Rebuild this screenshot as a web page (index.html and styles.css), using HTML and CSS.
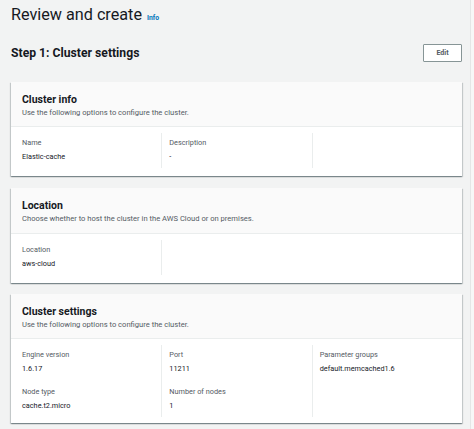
FILE: index.html
```html
<!DOCTYPE html>
<html lang="en">
<head>
<meta charset="utf-8">
<title>Review and create</title>
<link rel="stylesheet" href="styles.css">
</head>
<body>
<div class="page">
  <div class="page-header">
    <h1 class="page-title">Review and create</h1>
    <a class="info-link" href="#">Info</a>
  </div>

  <div class="step-header">
    <h2 class="step-title">Step 1: Cluster settings</h2>
    <button class="btn" type="button">Edit</button>
  </div>

  <section class="card">
    <div class="card-header">
      <h3 class="card-title">Cluster info</h3>
      <p class="card-desc">Use the following options to configure the cluster.</p>
    </div>
    <div class="card-body">
      <div class="col">
        <div class="field"><div class="label">Name</div><div class="value">Elastic-cache</div></div>
      </div>
      <div class="col">
        <div class="field"><div class="label">Description</div><div class="value">-</div></div>
      </div>
      <div class="col"></div>
    </div>
  </section>

  <section class="card">
    <div class="card-header card-header-tall">
      <h3 class="card-title">Location</h3>
      <p class="card-desc">Choose whether to host the cluster in the AWS Cloud or on premises.</p>
    </div>
    <div class="card-body">
      <div class="col">
        <div class="field"><div class="label">Location</div><div class="value">aws-cloud</div></div>
      </div>
      <div class="col col-wide"></div>
    </div>
  </section>

  <section class="card card-last">
    <div class="card-header">
      <h3 class="card-title">Cluster settings</h3>
      <p class="card-desc">Use the following options to configure the cluster.</p>
    </div>
    <div class="card-body card-body-tight">
      <div class="col">
        <div class="field"><div class="label">Engine version</div><div class="value">1.6.17</div></div>
        <div class="field"><div class="label">Node type</div><div class="value">cache.t2.micro</div></div>
      </div>
      <div class="col">
        <div class="field"><div class="label">Port</div><div class="value">11211</div></div>
        <div class="field"><div class="label">Number of nodes</div><div class="value">1</div></div>
      </div>
      <div class="col">
        <div class="field"><div class="label">Parameter groups</div><div class="value">default.memcached1.6</div></div>
      </div>
    </div>
  </section>
</div>
</body>
</html>
```

FILE: styles.css
```css
* { box-sizing: border-box; }

html, body {
  margin: 0;
  padding: 0;
  background: #f7f7f7;
}

body {
  font-family: Roboto, "Liberation Sans", sans-serif;
  color: #16191f;
}

.page {
  width: 471px;
  min-height: 429px;
  padding: 0 8px 20px 11px;
  background: #f2f3f3;
  border-right: 1px solid #e4e6e6;
}

.page-header {
  display: flex;
  align-items: baseline;
  gap: 5px;
  height: 34px;
  padding-top: 4px;
}

.page-title {
  margin: 0;
  font-size: 16.2px;
  line-height: 22px;
  font-weight: 400;
  color: #16191f;
}

.info-link {
  font-size: 6.8px;
  font-weight: 700;
  color: #0073bb;
  text-decoration: none;
}

.step-header {
  display: flex;
  justify-content: space-between;
  align-items: center;
  height: 36px;
  margin-top: 1px;
}

.step-title {
  margin: 0;
  font-size: 12.2px;
  line-height: 18px;
  font-weight: 700;
  color: #16191f;
}

.btn {
  width: 39px;
  height: 18px;
  padding: 0;
  background: #ffffff;
  border: 1px solid #879596;
  border-radius: 1px;
  font-family: Roboto, "Liberation Sans", sans-serif;
  font-size: 7px;
  font-weight: 700;
  color: #545b64;
}

.card {
  background: #ffffff;
  margin-top: 12px;
  box-shadow: 0 1px 1px 0 rgba(0, 28, 36, 0.3), 1px 1px 1px 0 rgba(0, 28, 36, 0.15), -1px 1px 1px 0 rgba(0, 28, 36, 0.15);
}

.step-header + .card { margin-top: 11px; }

.card-last { margin-top: 11px; }

.card-header {
  background: #fafafa;
  border-bottom: 1px solid #eaeded;
  padding: 11px 11px 10px;
  height: 45px;
}

.card-header-tall { height: 46px; padding-top: 11px; }

.card-title {
  margin: 0;
  font-size: 10.5px;
  line-height: 14px;
  font-weight: 700;
  color: #16191f;
}

.card-desc {
  margin: 0;
  font-size: 7.6px;
  line-height: 11px;
  color: #545b64;
}

.card-body {
  display: grid;
  grid-template-columns: 1fr 1fr 1fr;
  padding: 6px 0 8px;
}

.card-body-tight { padding-bottom: 6px; }

.col {
  padding: 3px 7px 4px 7px;
  border-left: 1px solid #eaeded;
  display: flex;
  flex-direction: column;
  gap: 9px;
}

.col:first-child {
  border-left: none;
  padding-left: 11px;
}

.col-wide { grid-column: span 2; }

.field {
  display: flex;
  flex-direction: column;
}

.label {
  font-size: 7.3px;
  line-height: 14px;
  color: #545b64;
}

.value {
  font-size: 7.3px;
  line-height: 14px;
  color: #16191f;
}
```
